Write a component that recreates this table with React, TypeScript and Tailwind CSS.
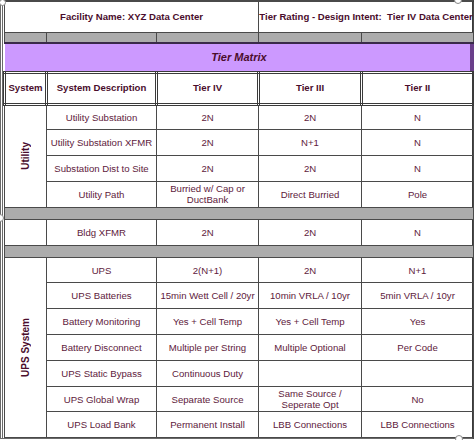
import React from "react";

const hatch =
  "[background:repeating-conic-gradient(#7a7a7a_0%_25%,#dedede_0%_50%)_0_0/2px_2px]";
const cell = "border border-[#4a4a4a] text-center align-middle p-0 leading-[11px]";
const hcell =
  "border-[3px] border-double border-[#3a3a3a] text-center align-middle p-0 font-bold text-[#4a0d2c]";

type Row = { d: string; a: React.ReactNode; b: React.ReactNode; c: React.ReactNode };

const utility: Row[] = [
  { d: "Utility Substation", a: "2N", b: "2N", c: "N" },
  { d: "Utility Substation XFMR", a: "2N", b: "N+1", c: "N" },
  { d: "Substation Dist to Site", a: "2N", b: "2N", c: "N" },
  {
    d: "Utility Path",
    a: (
      <>
        Burried w/ Cap or
        <br />
        DuctBank
      </>
    ),
    b: "Direct Burried",
    c: "Pole",
  },
];

const ups: Row[] = [
  { d: "UPS", a: "2(N+1)", b: "2N", c: "N+1" },
  { d: "UPS Batteries", a: "15min Wett Cell / 20yr", b: "10min VRLA / 10yr", c: "5min VRLA / 10yr" },
  { d: "Battery Monitoring", a: "Yes + Cell Temp", b: "Yes + Cell Temp", c: "Yes" },
  { d: "Battery Disconnect", a: "Multiple per String", b: "Multiple Optional", c: "Per Code" },
  { d: "UPS Static Bypass", a: "Continuous Duty", b: "", c: "" },
  {
    d: "UPS Global Wrap",
    a: "Separate Source",
    b: (
      <>
        Same Source /
        <br />
        Seperate Opt
      </>
    ),
    c: "No",
  },
  { d: "UPS Load Bank", a: "Permanent Install", b: "LBB Connections", c: "LBB Connections" },
];

function Vert({ text }: { text: string }) {
  return (
    <div className="flex items-center justify-center">
      <span className="[writing-mode:vertical-rl] rotate-180 font-bold text-[10px] text-[#4a0d2c]">
        {text}
      </span>
    </div>
  );
}

function DataRows({ rows, sys }: { rows: Row[]; sys: string }) {
  return (
    <>
      {rows.map((r, i) => (
        <tr key={r.d} className="h-[25.8px]">
          {i === 0 && (
            <td rowSpan={rows.length} className={cell}>
              <Vert text={sys} />
            </td>
          )}
          <td className={cell}>{r.d}</td>
          <td className={cell}>{r.a}</td>
          <td className={cell}>{r.b}</td>
          <td className={cell}>{r.c}</td>
        </tr>
      ))}
    </>
  );
}

export default function App() {
  return (
    <div className="relative w-[474px] h-[440px] overflow-hidden bg-white font-['Liberation_Sans',Arial,sans-serif] text-[#5e1a3c] text-[9.6px]">
      <div className="border-l-[3px] border-double border-[#6a6a6a] border-t-2 border-t-[#4a4a4a] border-r-2 border-r-[#3a3a3a] border-b border-b-[#6a6a6a]">
        <table className="table-fixed border-collapse w-[469px]">
          <colgroup>
            <col className="w-[42px]" />
            <col className="w-[110px]" />
            <col className="w-[102px]" />
            <col className="w-[103px]" />
            <col className="w-[112px]" />
          </colgroup>
          <tbody>
            <tr className="h-[30px]">
              <td colSpan={3} className={`${cell} border-t-0 font-bold text-[#4a0d2c]`}>
                Facility Name: XYZ Data Center
              </td>
              <td colSpan={2} className={`${cell} border-t-0 font-bold text-[#4a0d2c]`}>
                Tier Rating - Design Intent:&nbsp; Tier IV Data Center
              </td>
            </tr>
            <tr className="h-[11px]">
              <td className={`${cell} ${hatch}`} />
              <td className={`${cell} ${hatch}`} />
              <td className={`${cell} ${hatch}`} />
              <td className={`${cell} ${hatch}`} />
              <td className={`${cell} ${hatch}`} />
            </tr>
            <tr className="h-[29px]">
              <td
                colSpan={5}
                className="border-y-2 border-[#3a2a4a] bg-[#cc99ff] text-center align-middle p-0 font-bold italic text-[11px] text-[#4a0d2c] shadow-[inset_-4px_0_0_#6a3f8a]"
              >
                Tier Matrix
              </td>
            </tr>
            <tr className="h-[32px]">
              <td className={hcell}>System</td>
              <td className={hcell}>System Description</td>
              <td className={hcell}>Tier IV</td>
              <td className={hcell}>Tier III</td>
              <td className={hcell}>Tier II</td>
            </tr>
            <DataRows rows={utility} sys="Utility" />
            <tr className="h-[12px]">
              <td colSpan={5} className={`${cell} ${hatch}`} />
            </tr>
            <tr className="h-[26px]">
              <td className={cell} />
              <td className={cell}>Bldg XFMR</td>
              <td className={cell}>2N</td>
              <td className={cell}>2N</td>
              <td className={cell}>N</td>
            </tr>
            <tr className="h-[12px]">
              <td colSpan={5} className={`${cell} ${hatch}`} />
            </tr>
            <DataRows rows={ups} sys="UPS System" />
          </tbody>
        </table>
      </div>
      <div className="absolute left-[-1px] top-[-1px] w-[7px] h-[7px] rounded-full border border-[#888] bg-white" />
      <div className="absolute left-[454px] top-[-4px] w-[8px] h-[8px] rounded-full border border-[#888] bg-white" />
      <div className="absolute left-[455px] top-[435px] w-[8px] h-[8px] rounded-full border border-[#888] bg-white" />
      <div className="absolute left-[-4px] top-[214px] w-[8px] h-[8px] rounded-full border border-[#888] bg-white" />
    </div>
  );
}
